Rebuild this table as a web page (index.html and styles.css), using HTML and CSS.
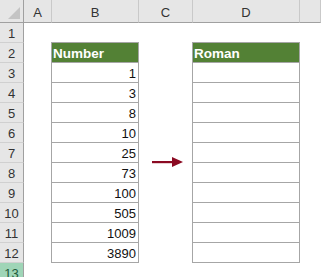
FILE: index.html
```html
<!DOCTYPE html>
<html>
<head>
<meta charset="utf-8">
<link rel="stylesheet" href="styles.css">
</head>
<body>
<div class="sheet">
  <div class="hrow">
    <div class="corner"><span class="tri"></span></div>
    <div class="ch cA">A</div>
    <div class="ch cB">B</div>
    <div class="ch cC">C</div>
    <div class="ch cD">D</div>
    <div class="ch cE"></div>
  </div>
  <div class="grid">
    <div class="rh">1</div><div></div><div class="top"></div><div></div><div class="top"></div><div></div>
    <div class="rh">2</div><div></div><div class="cell head">Number</div><div></div><div class="cell head">Roman</div><div></div>
    <div class="rh">3</div><div></div><div class="cell num">1</div><div></div><div class="cell"></div><div></div>
    <div class="rh">4</div><div></div><div class="cell num">3</div><div></div><div class="cell"></div><div></div>
    <div class="rh">5</div><div></div><div class="cell num">8</div><div></div><div class="cell"></div><div></div>
    <div class="rh">6</div><div></div><div class="cell num">10</div><div></div><div class="cell"></div><div></div>
    <div class="rh">7</div><div></div><div class="cell num">25</div><div></div><div class="cell"></div><div></div>
    <div class="rh">8</div><div></div><div class="cell num">73</div><div></div><div class="cell"></div><div></div>
    <div class="rh">9</div><div></div><div class="cell num">100</div><div></div><div class="cell"></div><div></div>
    <div class="rh">10</div><div></div><div class="cell num">505</div><div></div><div class="cell"></div><div></div>
    <div class="rh">11</div><div></div><div class="cell num">1009</div><div></div><div class="cell"></div><div></div>
    <div class="rh">12</div><div></div><div class="cell num">3890</div><div></div><div class="cell"></div><div></div>
    <div class="rh sel">13</div><div></div><div></div><div></div><div></div><div></div>
  </div>
  <svg class="arrow" width="32" height="12" viewBox="0 0 32 12">
    <rect x="0" y="5" width="21" height="2.2" fill="#8b0a22"/>
    <polygon points="20,1 31,6 20,11" fill="#8b0a22"/>
  </svg>
</div>
</body>
</html>
```
FILE: styles.css
```css
html, body {
  margin: 0;
  padding: 0;
  background: #fff;
}
body {
  font-family: "Liberation Sans", Arial, sans-serif;
  font-size: 13px;
  color: #222;
}
.sheet {
  position: relative;
  width: 321px;
  height: 277px;
  overflow: hidden;
}
.hrow {
  display: grid;
  grid-template-columns: 24px 28px 87px 54px 107px 1fr;
  height: 23px;
  background: #e6e6e6;
}
.hrow > div {
  border-bottom: 1px solid #a0a0a0;
  border-right: 1px solid #c9c9c9;
  display: flex;
  align-items: center;
  justify-content: center;
  color: #333;
  font-size: 13px;
  padding-top: 2px;
  box-sizing: border-box;
}
.hrow > .corner {
  border-right: 1px solid #a0a0a0;
  position: relative;
  padding: 0;
}
.tri {
  position: absolute;
  right: 3px;
  bottom: 3px;
  width: 0;
  height: 0;
  border-left: 12px solid transparent;
  border-bottom: 12px solid #c4c4c4;
}
.grid {
  display: grid;
  grid-template-columns: 24px 27px 88px 53px 108px 1fr;
  grid-auto-rows: 20px;
}
.rh {
  background: #e6e6e6;
  border-right: 1px solid #a0a0a0;
  border-bottom: 1px solid #d0d0d0;
  box-sizing: border-box;
  display: flex;
  align-items: center;
  justify-content: center;
  color: #333;
  padding-top: 1px;
}
.rh.sel {
  background: #9fd5b7;
  color: #1d5a3a;
  border-bottom: none;
}
.top {
  border-bottom: 1px solid #a6a6a6;
  box-sizing: border-box;
}
.cell {
  border-left: 1px solid #a6a6a6;
  border-right: 1px solid #a6a6a6;
  border-bottom: 1px solid #a6a6a6;
  box-sizing: border-box;
  display: flex;
  align-items: center;
  padding: 1px 2px 0 2px;
  color: #111;
}
.cell.num {
  justify-content: flex-end;
}
.cell.head {
  background: #538135;
  color: #fff;
  font-weight: bold;
  font-size: 13.5px;
  padding-left: 1px;
}
.arrow {
  position: absolute;
  left: 152px;
  top: 156px;
}
```
